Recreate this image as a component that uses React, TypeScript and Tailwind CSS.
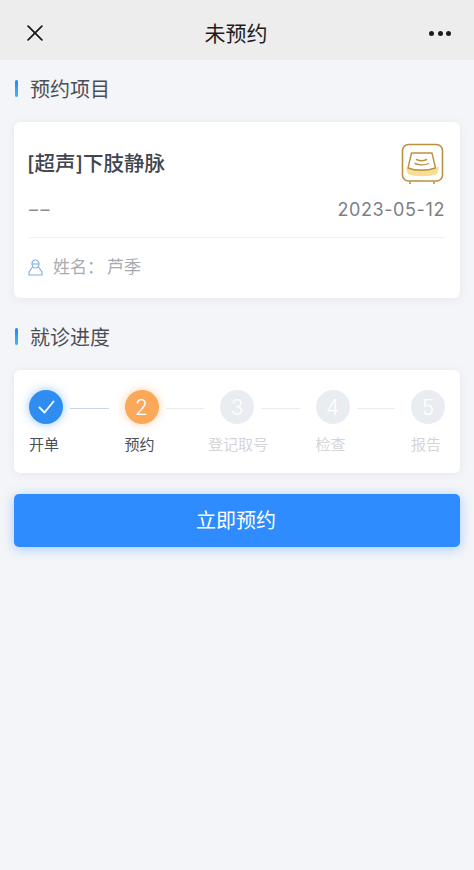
import { X } from 'lucide-react'

const font = { fontFamily: '"Inter", "Noto Sans CJK SC", sans-serif' }

const steps = [
  { n: '1', label: '开单', done: true },
  { n: '2', label: '预约', current: true },
  { n: '3', label: '登记取号', wide: true },
  { n: '4', label: '检查' },
  { n: '5', label: '报告' },
]

function SectionTitle({ text }: { text: string }) {
  return (
    <div className="flex items-center h-[34px] pl-[15px]">
      <span className="w-[3px] h-[17px] -mt-[3px] rounded-full bg-gradient-to-b from-[#2084f5] to-[#45b6f5] mr-[12px]" />
      <span className="text-[20px] leading-none text-[#4a4f57]">{text}</span>
    </div>
  )
}

function UltrasoundIcon() {
  return (
    <svg width="44" height="42" viewBox="0 0 44 42" fill="none">
      <path d="M5 25c8 2 24 2 33-1l-2 7c-8 3-22 3-29 0z" fill="#f8dd95" />
      <rect x="1.500" y="1.500" width="40" height="36.500" rx="6" stroke="#b8923f" strokeWidth="1.600" />
      <path d="M9 38.500v2.500M33 38.500v2.500" stroke="#b8923f" strokeWidth="1.600" />
      <path d="M10.500 10h20.500l3.500 15c-8 3-20 3-27.500 0z" stroke="#b8923f" strokeWidth="1.400" strokeLinejoin="round" />
      <path d="M15.500 16.500c3 1.500 7 1.500 10 0M14 20.500c4 1.800 10 1.800 13.500 0" stroke="#b8923f" strokeWidth="1.400" strokeLinecap="round" />
    </svg>
  )
}

function Step({ step, last }: { step: (typeof steps)[number]; last: boolean }) {
  let circle = 'bg-[#e9ecf1] text-white'
  if (step.done) circle = 'bg-[#2f8cf0] shadow-[0_0_10px_rgba(47,140,240,0.5)]'
  if (step.current) circle = 'bg-[#fba85b] text-white shadow-[0_0_10px_rgba(251,168,91,0.55)]'

  return (
    <>
      <div className="flex flex-col items-start w-[34px] shrink-0">
        <div className={`w-[34px] h-[34px] rounded-full flex items-center justify-center text-[21px] font-light leading-none ${circle}`}>
          {step.done ? (
            <svg width="17" height="14" viewBox="0 0 17 14" fill="none">
              <path d="M1.500 7.500l5 5 9-11" stroke="#fff" strokeWidth="1.800" strokeLinecap="round" strokeLinejoin="round" />
            </svg>
          ) : (
            step.n
          )}
        </div>
        <span
          className={`mt-[13px] text-[15px] leading-none whitespace-nowrap ${step.done || step.current ? 'text-[#4a4f57]' : 'text-[#d3d5d9]'} ${step.wide ? '-ml-[12px]' : ''}`}
        >
          {step.label}
        </span>
      </div>
      {!last && (
        <div className={`flex-1 h-px mt-[18px] ml-[7px] mr-[16px] self-start ${step.done ? 'bg-[#c5d6ee]' : 'bg-[#e8ebf0]'}`} />
      )}
    </>
  )
}

export default function App() {
  return (
    <div className="min-h-screen bg-[#f4f5f8]" style={font}>
      <div className="h-[60px] bg-[#ededed] flex items-center justify-between pt-[6px] pl-[25px] pr-[23px]">
        <X size={22} strokeWidth={1.600} className="text-[#1c1c1c] -ml-[1px] scale-125" />
        <span className="text-[21px] leading-none text-[#1c1c1c] -ml-[3px]">未预约</span>
        <div className="flex gap-[3.500px]">
          <span className="w-[5px] h-[5px] rounded-full bg-[#1c1c1c]" />
          <span className="w-[5px] h-[5px] rounded-full bg-[#1c1c1c]" />
          <span className="w-[5px] h-[5px] rounded-full bg-[#1c1c1c]" />
        </div>
      </div>

      <div className="pt-[13px]">
        <SectionTitle text="预约项目" />
      </div>

      <div className="mx-[14px] mt-[15px] h-[176px] bg-white rounded-[6px] shadow-[0_1px_8px_rgba(120,130,150,0.12)] px-[15px]">
        <div className="flex items-center justify-between h-[76px] pt-[8px]">
          <span className="text-[20.500px] leading-none text-[#41454d] font-medium -ml-[2px]">[超声]下肢静脉</span>
          <UltrasoundIcon />
        </div>
        <div className="flex items-center justify-between h-[24px]">
          <span className="text-[18px] leading-none text-[#8a8d93] tracking-[2.500px]">––</span>
          <span className="text-[18px] leading-none text-[#7c7f85] tracking-[0.6px]">2023-05-12</span>
        </div>
        <div className="h-px bg-[#f0f1f3] mt-[15px]" />
        <div className="flex items-center h-[59px]">
          <svg width="15" height="17" viewBox="0 0 15 17" fill="none" stroke="#7eaee0" strokeWidth="1.100" className="-ml-[1px]">
            <path d="M4 4.500a3.500 3.500 0 0 1 7 0c0 2.500-1 4.500-3.500 4.500S4 7 4 4.500z" />
            <path d="M4 5h7" />
            <path d="M4.500 8L1 13v3h13v-3l-3.500-5" />
          </svg>
          <span className="ml-[10px] text-[17px] leading-none text-[#a9abb0]">姓名：</span>
          <span className="ml-[3px] text-[17px] leading-none text-[#a9abb0]">芦季</span>
        </div>
      </div>

      <div className="pt-[23px]">
        <SectionTitle text="就诊进度" />
      </div>

      <div className="mx-[14px] mt-[15px] h-[103px] bg-white rounded-[6px] shadow-[0_1px_8px_rgba(120,130,150,0.12)] px-[15px] pt-[20px] flex items-start">
        {steps.map((s, i) => (
          <Step key={s.n} step={s} last={i === steps.length - 1} />
        ))}
      </div>

      <button className="block mx-[14px] mt-[21px] w-[446px] h-[53px] rounded-[5px] bg-[#2e8cfe] text-white text-[20px] pr-[2px] shadow-[0_2px_12px_rgba(46,140,254,0.4)]">
        立即预约
      </button>
    </div>
  )
}
